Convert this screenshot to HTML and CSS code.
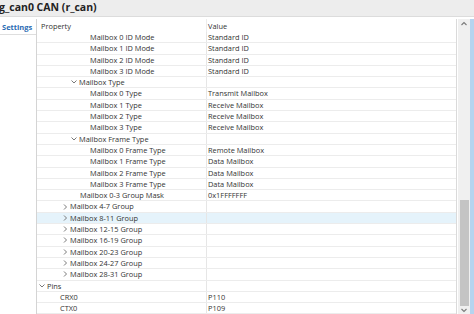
FILE: index.html
```html
<!DOCTYPE html>
<html lang="en">
<head>
    <meta charset="UTF-8">
    <title>r_can properties</title>
    <link rel="stylesheet" href="styles.css">
</head>
<body>
    <div class="window">
        <div class="titlebar">g_can0 CAN (r_can)</div>

        <div class="main">
            <div class="sidebar">
                <div class="tab">Settings</div>
            </div>

            <div class="grid">
                <div class="row head">
                    <div class="cell">Property</div>
                    <div class="cell val">Value</div>
                </div>

                <div class="row"><div class="cell l4">Mailbox 0 ID Mode</div><div class="cell val">Standard ID</div></div>
                <div class="row"><div class="cell l4">Mailbox 1 ID Mode</div><div class="cell val">Standard ID</div></div>
                <div class="row"><div class="cell l4">Mailbox 2 ID Mode</div><div class="cell val">Standard ID</div></div>
                <div class="row"><div class="cell l4">Mailbox 3 ID Mode</div><div class="cell val">Standard ID</div></div>

                <div class="row"><div class="cell l3"><svg class="chev" viewBox="0 0 8 8"><polyline points="1.5,2.5 4,5 6.5,2.5"/></svg>Mailbox Type</div><div class="cell val"></div></div>
                <div class="row"><div class="cell l4">Mailbox 0 Type</div><div class="cell val">Transmit Mailbox</div></div>
                <div class="row"><div class="cell l4">Mailbox 1 Type</div><div class="cell val">Receive Mailbox</div></div>
                <div class="row"><div class="cell l4">Mailbox 2 Type</div><div class="cell val">Receive Mailbox</div></div>
                <div class="row"><div class="cell l4">Mailbox 3 Type</div><div class="cell val">Receive Mailbox</div></div>

                <div class="row"><div class="cell l3"><svg class="chev" viewBox="0 0 8 8"><polyline points="1.5,2.5 4,5 6.5,2.5"/></svg>Mailbox Frame Type</div><div class="cell val"></div></div>
                <div class="row"><div class="cell l4">Mailbox 0 Frame Type</div><div class="cell val">Remote Mailbox</div></div>
                <div class="row"><div class="cell l4">Mailbox 1 Frame Type</div><div class="cell val">Data Mailbox</div></div>
                <div class="row"><div class="cell l4">Mailbox 2 Frame Type</div><div class="cell val">Data Mailbox</div></div>
                <div class="row"><div class="cell l4">Mailbox 3 Frame Type</div><div class="cell val">Data Mailbox</div></div>
                <div class="row"><div class="cell l3leaf">Mailbox 0-3 Group Mask</div><div class="cell val">0x1FFFFFFF</div></div>

                <div class="row"><div class="cell l2"><svg class="chev" viewBox="0 0 8 8"><polyline points="3,1.5 5.5,4 3,6.5"/></svg>Mailbox 4-7 Group</div><div class="cell val"></div></div>
                <div class="row selected"><div class="cell l2"><svg class="chev" viewBox="0 0 8 8"><polyline points="3,1.5 5.5,4 3,6.5"/></svg>Mailbox 8-11 Group</div><div class="cell val"></div></div>
                <div class="row"><div class="cell l2"><svg class="chev" viewBox="0 0 8 8"><polyline points="3,1.5 5.5,4 3,6.5"/></svg>Mailbox 12-15 Group</div><div class="cell val"></div></div>
                <div class="row"><div class="cell l2"><svg class="chev" viewBox="0 0 8 8"><polyline points="3,1.5 5.5,4 3,6.5"/></svg>Mailbox 16-19 Group</div><div class="cell val"></div></div>
                <div class="row"><div class="cell l2"><svg class="chev" viewBox="0 0 8 8"><polyline points="3,1.5 5.5,4 3,6.5"/></svg>Mailbox 20-23 Group</div><div class="cell val"></div></div>
                <div class="row"><div class="cell l2"><svg class="chev" viewBox="0 0 8 8"><polyline points="3,1.5 5.5,4 3,6.5"/></svg>Mailbox 24-27 Group</div><div class="cell val"></div></div>
                <div class="row"><div class="cell l2"><svg class="chev" viewBox="0 0 8 8"><polyline points="3,1.5 5.5,4 3,6.5"/></svg>Mailbox 28-31 Group</div><div class="cell val"></div></div>

                <div class="row"><div class="cell l0"><svg class="chev" viewBox="0 0 8 8"><polyline points="1.5,2.5 4,5 6.5,2.5"/></svg>Pins</div><div class="cell val"></div></div>
                <div class="row"><div class="cell l1">CRX0</div><div class="cell val">P110</div></div>
                <div class="row"><div class="cell l1">CTX0</div><div class="cell val">P109</div></div>
            </div>

            <div class="scrollbar">
                <svg class="arrow up" viewBox="0 0 8 6"><polyline points="1.5,4 4,1.5 6.5,4"/></svg>
                <div class="track">
                    <div class="thumb"></div>
                </div>
                <svg class="arrow down" viewBox="0 0 8 6"><polyline points="1.5,2 4,4.5 6.5,2"/></svg>
            </div>

            <div class="edge"></div>
        </div>
    </div>
</body>
</html>
```

FILE: styles.css
```css
/* Ventana */
body {
    margin: 0;
    padding: 0;
    font-family: 'Open Sans', 'Noto Sans', sans-serif;
    color: #333;
    background-color: #fff;
    overflow: hidden;
}

.window {
    width: 474px;
    height: 314px;
    display: flex;
    flex-direction: column;
}

.titlebar {
    height: 17px;
    box-sizing: border-box;
    background-color: #ededed;
    border-bottom: 1px solid #dcdcdc;
    font-size: 10.5px;
    font-weight: bold;
    line-height: 14px;
    color: #222;
    margin-left: -1px;
    white-space: nowrap;
}

.main {
    flex: 1;
    display: flex;
    min-height: 0;
    padding-top: 2px;
}

/* Pestañas a la izquierda */
.sidebar {
    width: 36px;
    border-right: 1px solid #d4d4d4;
    flex-shrink: 0;
}

.tab {
    height: 16px;
    box-sizing: border-box;
    border-bottom: 1px solid #dedede;
    font-size: 7.5px;
    font-weight: bold;
    color: #2b6cb3;
    padding-left: 2px;
    padding-top: 3px;
}

/* Tabla de propiedades */
.grid {
    flex: 1;
    border-right: 1px solid #dadada;
    overflow: hidden;
}

.row {
    display: grid;
    grid-template-columns: 169px 1fr;
    height: 11.3px;
    box-sizing: border-box;
    border-bottom: 1px solid #ececec;
    font-size: 7.4px;
    line-height: 10.3px;
    white-space: nowrap;
}

.row.head {
    height: 13px;
    line-height: 12px;
    border-bottom: none;
}

.row.selected {
    background-color: #e5f3fb;
}

.cell {
    display: flex;
    align-items: center;
    overflow: hidden;
    padding-left: 4px;
}

.cell.val {
    border-left: 1px solid #e6e6e6;
    padding-left: 1px;
}

.row.head .cell.val {
    border-left-color: #ececec;
}

.l0 { padding-left: 1px; }
.l1 { padding-left: 23px; }
.l2 { padding-left: 24px; }
.l3 { padding-left: 33px; }
.l3leaf { padding-left: 43px; }
.l4 { padding-left: 53px; }

.chev {
    width: 8px;
    height: 8px;
    margin-right: 1px;
    fill: none;
    stroke: #6a6a6a;
    stroke-width: 0.9;
}

/* Barra de desplazamiento */
.scrollbar {
    width: 12px;
    margin-left: 1px;
    background-color: #f0f0f0;
    display: flex;
    flex-direction: column;
    align-items: center;
    flex-shrink: 0;
}

.arrow {
    width: 8px;
    height: 6px;
    fill: none;
    stroke: #7a7a7a;
    stroke-width: 1.1;
}

.arrow.up {
    margin: 2px 0 4px;
}

.arrow.down {
    margin: 1px 0 1px;
}

.track {
    flex: 1;
    width: 100%;
    display: flex;
    flex-direction: column;
    justify-content: flex-end;
}

.thumb {
    height: 106px;
    margin: 0 1px 0 2px;
    background-color: #c4c4c4;
}

.edge {
    width: 4px;
    background-color: #b5d4ef;
    flex-shrink: 0;
}
```
